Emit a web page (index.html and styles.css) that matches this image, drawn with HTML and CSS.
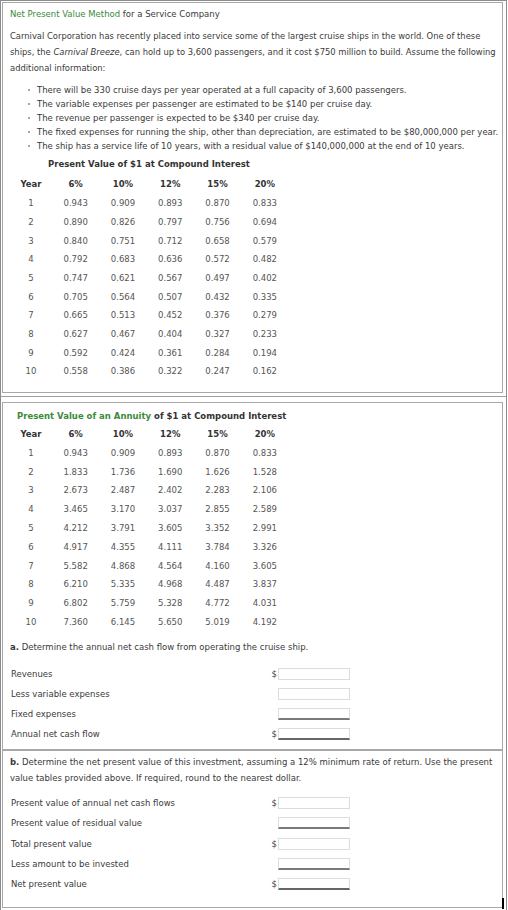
FILE: index.html
```html
<!DOCTYPE html>
<html>
<head>
<meta charset="utf-8">
<link rel="stylesheet" href="styles.css">
</head>
<body>
<div class="page">
  <section class="box box-intro">
    <div class="title"><span class="green">Net Present Value Method</span> for a Service Company</div>
    <p class="para">Carnival Corporation has recently placed into service some of the largest cruise ships in the world. One of these ships, the <i>Carnival Breeze</i>, can hold up to 3,600 passengers, and it cost $750 million to build. Assume the following additional information:</p>
    <ul class="bullets">
      <li>There will be 330 cruise days per year operated at a full capacity of 3,600 passengers.</li>
      <li>The variable expenses per passenger are estimated to be $140 per cruise day.</li>
      <li>The revenue per passenger is expected to be $340 per cruise day.</li>
      <li>The fixed expenses for running the ship, other than depreciation, are estimated to be $80,000,000 per year.</li>
      <li>The ship has a service life of 10 years, with a residual value of $140,000,000 at the end of 10 years.</li>
    </ul>
    <div class="tbl-head indent">Present Value of $1 at Compound Interest</div>
    <table class="pv">
      <thead><tr><th>Year</th><th>6%</th><th>10%</th><th>12%</th><th>15%</th><th>20%</th></tr></thead>
      <tbody>
        <tr><td>1</td><td>0.943</td><td>0.909</td><td>0.893</td><td>0.870</td><td>0.833</td></tr>
        <tr><td>2</td><td>0.890</td><td>0.826</td><td>0.797</td><td>0.756</td><td>0.694</td></tr>
        <tr><td>3</td><td>0.840</td><td>0.751</td><td>0.712</td><td>0.658</td><td>0.579</td></tr>
        <tr><td>4</td><td>0.792</td><td>0.683</td><td>0.636</td><td>0.572</td><td>0.482</td></tr>
        <tr><td>5</td><td>0.747</td><td>0.621</td><td>0.567</td><td>0.497</td><td>0.402</td></tr>
        <tr><td>6</td><td>0.705</td><td>0.564</td><td>0.507</td><td>0.432</td><td>0.335</td></tr>
        <tr><td>7</td><td>0.665</td><td>0.513</td><td>0.452</td><td>0.376</td><td>0.279</td></tr>
        <tr><td>8</td><td>0.627</td><td>0.467</td><td>0.404</td><td>0.327</td><td>0.233</td></tr>
        <tr><td>9</td><td>0.592</td><td>0.424</td><td>0.361</td><td>0.284</td><td>0.194</td></tr>
        <tr><td>10</td><td>0.558</td><td>0.386</td><td>0.322</td><td>0.247</td><td>0.162</td></tr>
      </tbody>
    </table>
  </section>
  <div class="sep"></div>
  <section class="box box-a">
    <div class="tbl-head indent2"><span class="green">Present Value of an Annuity</span> of $1 at Compound Interest</div>
    <table class="pv pv2">
      <thead><tr><th>Year</th><th>6%</th><th>10%</th><th>12%</th><th>15%</th><th>20%</th></tr></thead>
      <tbody>
        <tr><td>1</td><td>0.943</td><td>0.909</td><td>0.893</td><td>0.870</td><td>0.833</td></tr>
        <tr><td>2</td><td>1.833</td><td>1.736</td><td>1.690</td><td>1.626</td><td>1.528</td></tr>
        <tr><td>3</td><td>2.673</td><td>2.487</td><td>2.402</td><td>2.283</td><td>2.106</td></tr>
        <tr><td>4</td><td>3.465</td><td>3.170</td><td>3.037</td><td>2.855</td><td>2.589</td></tr>
        <tr><td>5</td><td>4.212</td><td>3.791</td><td>3.605</td><td>3.352</td><td>2.991</td></tr>
        <tr><td>6</td><td>4.917</td><td>4.355</td><td>4.111</td><td>3.784</td><td>3.326</td></tr>
        <tr><td>7</td><td>5.582</td><td>4.868</td><td>4.564</td><td>4.160</td><td>3.605</td></tr>
        <tr><td>8</td><td>6.210</td><td>5.335</td><td>4.968</td><td>4.487</td><td>3.837</td></tr>
        <tr><td>9</td><td>6.802</td><td>5.759</td><td>5.328</td><td>4.772</td><td>4.031</td></tr>
        <tr><td>10</td><td>7.360</td><td>6.145</td><td>5.650</td><td>5.019</td><td>4.192</td></tr>
      </tbody>
    </table>
    <p class="question"><b>a.</b> Determine the annual net cash flow from operating the cruise ship.</p>
    <div class="form form-a">
      <div class="row"><span class="label">Revenues</span><span class="cur">$</span><span class="field"></span></div>
      <div class="row"><span class="label">Less variable expenses</span><span class="cur"></span><span class="field"></span></div>
      <div class="row"><span class="label">Fixed expenses</span><span class="cur"></span><span class="field single"></span></div>
      <div class="row"><span class="label">Annual net cash flow</span><span class="cur">$</span><span class="field double"></span></div>
    </div>
  </section>
  <section class="box box-b">
    <p class="question qb"><b>b.</b> Determine the net present value of this investment, assuming a 12% minimum rate of return. Use the present value tables provided above. If required, round to the nearest dollar.</p>
    <div class="form form-b">
      <div class="row"><span class="label">Present value of annual net cash flows</span><span class="cur">$</span><span class="field"></span></div>
      <div class="row"><span class="label">Present value of residual value</span><span class="cur"></span><span class="field single"></span></div>
      <div class="row"><span class="label">Total present value</span><span class="cur">$</span><span class="field"></span></div>
      <div class="row"><span class="label">Less amount to be invested</span><span class="cur"></span><span class="field single"></span></div>
      <div class="row"><span class="label">Net present value</span><span class="cur">$</span><span class="field double"></span></div>
    </div>
  </section>
  <div class="caret"></div>
</div>
</body>
</html>
```

FILE: styles.css
```css
html, body {
  margin: 0;
  padding: 0;
  background: #fff;
}
body {
  font-family: "DejaVu Sans", Verdana, sans-serif;
  font-size: 8.5px;
  color: #3a3a3a;
}
.page {
  position: relative;
  width: 507px;
  height: 910px;
  box-sizing: border-box;
  border-left: 1px solid #8c8c8c;
  border-right: 1px solid #8c8c8c;
  border-top: 1px solid #8c8c8c;
  padding-top: 1px;
}
.box {
  margin-left: 1px;
  width: 501px;
  box-sizing: border-box;
  border: 1px solid #a8a8a8;
  padding-left: 7px;
}
.green { color: #3b8a3b; }
.title {
  line-height: 16px;
  padding-top: 3px;
}
.para {
  margin: 6px 0 0;
  line-height: 16px;
  font-size: 8.4px;
}
.bullets {
  list-style: none;
  margin: 6.5px 0 0;
  padding: 0 0 0 27px;
}
.bullets li {
  position: relative;
  line-height: 14px;
}
.bullets li::before {
  content: "";
  position: absolute;
  left: -9px;
  top: 6px;
  width: 2px;
  height: 2px;
  border-radius: 1px;
  background: #888;
}
.tbl-head {
  font-weight: bold;
  line-height: 14px;
  color: #333;
}
.indent {
  margin: 4px 0 0 38px;
}
.indent2 {
  margin-left: 7px;
}
.box-intro { height: 391px; }
.pv {
  border-collapse: collapse;
  table-layout: fixed;
  margin-top: 4.6px;
}
.pv th, .pv td {
  padding: 0;
  text-align: center;
  height: 18.7px;
  color: #555;
}
.pv th { color: #333; font-weight: bold; }
.pv th, .pv td { width: 47.3px; }
.pv th:first-child, .pv td:first-child { width: 42px; }
.pv2 { margin-top: 1.6px; }
.pv2 th, .pv2 td { height: 18.8px; }
.sep {
  margin: 3px 0 5px;
  border-top: 1px solid #a0a0a0;
}
.box-a {
  padding-top: 6px;
  height: 348px;
}
.question {
  margin: 8.6px 0 0;
  line-height: 14px;
}
.qb { margin-top: 3px; line-height: 16px; }
.form { margin-top: 10px; }
.form-b { margin-top: 7px; }
.row {
  display: flex;
  align-items: center;
  height: 20px;
  padding-left: 1px;
}
.form-b .row { height: 20.25px; }
.label { width: 258px; }
.cur {
  width: 8px;
  text-align: right;
  padding-right: 1px;
  color: #444;
}
.field {
  display: block;
  width: 72px;
  height: 12px;
  box-sizing: border-box;
  border: 1px solid #dcdcdc;
  background: #fff;
}
.field.single { border-bottom: 2px solid #7a7a7a; }
.field.double { border-bottom: 2px solid #666; }
.box-b {
  height: 158px;
}
.caret {
  position: absolute;
  left: 501px;
  top: 897px;
  width: 2px;
  height: 11px;
  background: #000;
}
```
